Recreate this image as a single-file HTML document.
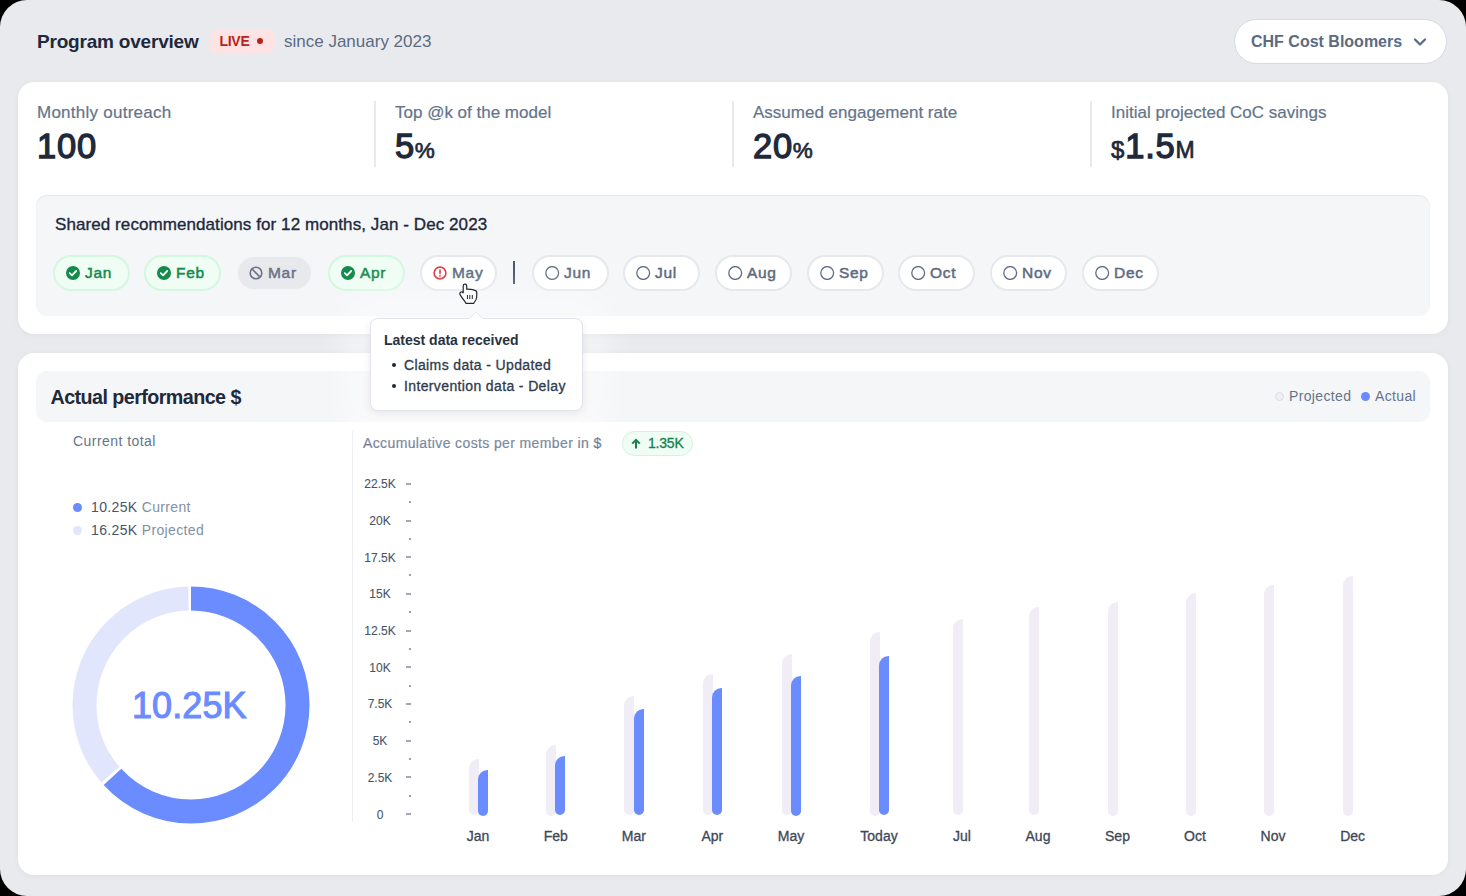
<!DOCTYPE html>
<html><head><meta charset="utf-8">
<style>
*{box-sizing:border-box;margin:0;padding:0}
html,body{width:1466px;height:896px;overflow:hidden;background:#000}
body{font-family:"Liberation Sans",sans-serif;position:relative}
.frame{position:absolute;left:0;top:0;width:1466px;height:896px;background:#e9eaee;border-radius:27px;overflow:hidden}
.t{position:absolute;line-height:1;white-space:nowrap}
.panel{position:absolute;left:18px;width:1430px;background:#fff;border-radius:16px;box-shadow:0 1px 6px rgba(15,23,42,0.045)}
.gbox{position:absolute;background:#f5f6f8;border-radius:11px}
.vdiv{position:absolute;width:2px;background:#e7e9ee}
.chip{position:absolute;top:255px;height:36px;width:77px;border-radius:18px;border:2px solid #e6e8ec;background:#fff}
.chip.g{background:#effdf4;border-color:#d3f8df}
.chip.x{background:#e8e9ed;border-color:#f4f5f7}
.chip svg{position:absolute;left:11px;top:9px}
.chip span{position:absolute;left:30px;top:7px;font-size:15.5px;line-height:18px;color:#5d6b82;-webkit-text-stroke-width:0.5px;letter-spacing:0.7px}
.chip.g span{color:#148a4b}
.chip.x span{color:#6b7385}
.ylab{position:absolute;font-size:12px;line-height:1;color:#475569;-webkit-text-stroke-width:0.1px;width:40px;text-align:center;left:360px}
.tick{position:absolute;left:406px;width:5px;height:1.5px;background:#a0a8b8}
.mtick{position:absolute;left:409px;width:2px;height:1.5px;background:#98a1b2}
.bar{position:absolute;width:10px;border-radius:9.5px 0 5px 5px}
.bg{background:#f0edf6}
.bb{background:#6b8cff}
.xl{position:absolute;top:829px;font-size:14px;line-height:1;color:#3e4859;-webkit-text-stroke-width:0.3px;width:60px;text-align:center}
</style></head><body>
<div class="frame">
  <!-- header -->
  <div class="t" style="left:37px;top:32px;font-size:19px;font-weight:bold;color:#1e293b;letter-spacing:-0.2px">Program overview</div>
  <div style="position:absolute;left:209px;top:29px;width:65.5px;height:24.5px;border-radius:10px;background:#fde3e3"></div>
  <div class="t" style="left:219.5px;top:34px;font-size:14px;font-weight:bold;color:#b8221c;letter-spacing:-0.3px">LIVE</div>
  <div style="position:absolute;left:257px;top:38px;width:6px;height:6px;border-radius:50%;background:#b8221c"></div>
  <div class="t" style="left:284px;top:33px;font-size:17px;color:#5b6b82">since January 2023</div>

  <div style="position:absolute;left:1234px;top:18.5px;width:213px;height:45px;border-radius:23px;background:#fff;border:1px solid #d6dae1"></div>
  <div class="t" style="left:1251px;top:34px;font-size:16px;font-weight:bold;color:#5b6b82">CHF Cost Bloomers</div>
  <svg style="position:absolute;left:1413.3px;top:36.5px" width="14" height="10" viewBox="0 0 14 10"><path d="M2 2.5 L7 7.5 L12 2.5" fill="none" stroke="#5b6b82" stroke-width="2.3" stroke-linecap="round" stroke-linejoin="round"/></svg>

  <!-- panel 1 -->
  <div class="panel" style="top:82px;height:252px"></div>
  <div class="t" style="left:37px;top:104px;font-size:17px;color:#64748b;-webkit-text-stroke-width:0.2px;letter-spacing:0.25px">Monthly outreach</div>
  <div class="t" style="left:37px;top:129px;font-size:34.5px;color:#1e293b;-webkit-text-stroke-width:1.3px;letter-spacing:0.8px">100</div>
  <div class="vdiv" style="left:374px;top:101px;height:66px"></div>
  <div class="t" style="left:395px;top:104px;font-size:17px;color:#64748b;-webkit-text-stroke-width:0.2px">Top @k of the model</div>
  <div class="t" style="left:395px;top:129px;font-size:34.5px;color:#1e293b;-webkit-text-stroke-width:1.3px;letter-spacing:0.8px">5<span style="font-size:22.5px;margin-left:-0.3px;letter-spacing:0;-webkit-text-stroke-width:0.7px">%</span></div>
  <div class="vdiv" style="left:732px;top:101px;height:66px"></div>
  <div class="t" style="left:753px;top:104px;font-size:17px;color:#64748b;-webkit-text-stroke-width:0.2px">Assumed engagement rate</div>
  <div class="t" style="left:753px;top:129px;font-size:34.5px;color:#1e293b;-webkit-text-stroke-width:1.3px;letter-spacing:0.8px">20<span style="font-size:22.5px;margin-left:-0.3px;letter-spacing:0;-webkit-text-stroke-width:0.7px">%</span></div>
  <div class="vdiv" style="left:1090px;top:101px;height:66px"></div>
  <div class="t" style="left:1111px;top:104px;font-size:17px;color:#64748b;-webkit-text-stroke-width:0.2px">Initial projected CoC savings</div>
  <div class="t" style="left:1111px;top:129px;font-size:34.5px;color:#1e293b;-webkit-text-stroke-width:1.3px;letter-spacing:0.8px"><span style="font-size:24px;-webkit-text-stroke-width:0.7px">$</span>1.5<span style="font-size:23px;letter-spacing:0;-webkit-text-stroke-width:0.7px">M</span></div>

  <div class="gbox" style="left:36px;top:195px;width:1394px;height:121px;box-shadow:inset 0 1px 1.5px rgba(16,24,40,0.07)"></div>
  <div class="t" style="left:55px;top:216px;font-size:17px;color:#1e293b;letter-spacing:0.08px;-webkit-text-stroke-width:0.35px">Shared recommendations for 12 months, Jan - Dec 2023</div>

  <div class="chip g" style="left:53px"><svg width="14" height="14" viewBox="0 0 14 14"><circle cx="7" cy="7" r="7" fill="#148a4b"/><path d="M3.8 7.2 L6 9.3 L10.2 5" fill="none" stroke="#fff" stroke-width="1.8" stroke-linecap="round" stroke-linejoin="round"/></svg><span>Jan</span></div>
  <div class="chip g" style="left:144px"><svg width="14" height="14" viewBox="0 0 14 14"><circle cx="7" cy="7" r="7" fill="#148a4b"/><path d="M3.8 7.2 L6 9.3 L10.2 5" fill="none" stroke="#fff" stroke-width="1.8" stroke-linecap="round" stroke-linejoin="round"/></svg><span>Feb</span></div>
  <div class="chip x" style="left:236px"><svg width="14" height="14" viewBox="0 0 14 14"><circle cx="7" cy="7" r="5.8" fill="none" stroke="#6b7385" stroke-width="1.6"/><path d="M3 3 L11 11" stroke="#6b7385" stroke-width="1.6"/></svg><span>Mar</span></div>
  <div class="chip g" style="left:328px"><svg width="14" height="14" viewBox="0 0 14 14"><circle cx="7" cy="7" r="7" fill="#148a4b"/><path d="M3.8 7.2 L6 9.3 L10.2 5" fill="none" stroke="#fff" stroke-width="1.8" stroke-linecap="round" stroke-linejoin="round"/></svg><span>Apr</span></div>
  <div class="chip" style="left:420px"><svg width="14" height="14" viewBox="0 0 14 14"><circle cx="7" cy="7" r="5.9" fill="none" stroke="#e0393e" stroke-width="1.6"/><path d="M7 4 L7 7.6" stroke="#e0393e" stroke-width="1.6" stroke-linecap="round"/><circle cx="7" cy="9.9" r="0.9" fill="#e0393e"/></svg><span>May</span></div>
  <div style="position:absolute;left:513px;top:261px;width:2px;height:23px;background:#4a5870"></div>
  <div class="chip" style="left:532px"><svg width="15" height="14" viewBox="0 0 15 14"><circle cx="7.2" cy="7" r="6.4" fill="none" stroke="#5d6b82" stroke-width="1.25"/></svg><span>Jun</span></div>
  <div class="chip" style="left:623px"><svg width="15" height="14" viewBox="0 0 15 14"><circle cx="7.2" cy="7" r="6.4" fill="none" stroke="#5d6b82" stroke-width="1.25"/></svg><span>Jul</span></div>
  <div class="chip" style="left:715px"><svg width="15" height="14" viewBox="0 0 15 14"><circle cx="7.2" cy="7" r="6.4" fill="none" stroke="#5d6b82" stroke-width="1.25"/></svg><span>Aug</span></div>
  <div class="chip" style="left:807px"><svg width="15" height="14" viewBox="0 0 15 14"><circle cx="7.2" cy="7" r="6.4" fill="none" stroke="#5d6b82" stroke-width="1.25"/></svg><span>Sep</span></div>
  <div class="chip" style="left:898px"><svg width="15" height="14" viewBox="0 0 15 14"><circle cx="7.2" cy="7" r="6.4" fill="none" stroke="#5d6b82" stroke-width="1.25"/></svg><span>Oct</span></div>
  <div class="chip" style="left:990px"><svg width="15" height="14" viewBox="0 0 15 14"><circle cx="7.2" cy="7" r="6.4" fill="none" stroke="#5d6b82" stroke-width="1.25"/></svg><span>Nov</span></div>
  <div class="chip" style="left:1082px"><svg width="15" height="14" viewBox="0 0 15 14"><circle cx="7.2" cy="7" r="6.4" fill="none" stroke="#5d6b82" stroke-width="1.25"/></svg><span>Dec</span></div>

  <!-- panel 2 -->
  <div class="panel" style="top:353px;height:522px"></div>
  <div class="gbox" style="left:36.3px;top:371.3px;width:1393.7px;height:50.5px"></div>
  <div class="t" style="left:50.5px;top:387.5px;font-size:19.7px;font-weight:bold;color:#1e293b;letter-spacing:-0.55px">Actual performance $</div>
  <div style="position:absolute;left:1275px;top:392px;width:9px;height:9px;border-radius:50%;border:1px solid #d9dde5;background:#f0eef5"></div>
  <div class="t" style="left:1289px;top:389px;font-size:14px;color:#64748b;letter-spacing:0.35px">Projected</div>
  <div style="position:absolute;left:1361px;top:392px;width:9px;height:9px;border-radius:50%;background:#6b8cff"></div>
  <div class="t" style="left:1375px;top:389px;font-size:14px;color:#64748b;letter-spacing:0.35px">Actual</div>

  <div class="t" style="left:73px;top:434px;font-size:14px;color:#64748b;letter-spacing:0.45px">Current total</div>
  <div style="position:absolute;left:73px;top:503px;width:9px;height:9px;border-radius:50%;background:#6b8cff"></div>
  <div class="t" style="left:91px;top:500px;font-size:14px;color:#475569;letter-spacing:0.35px">10.25K <span style="color:#8390a3">Current</span></div>
  <div style="position:absolute;left:73px;top:526px;width:9px;height:9px;border-radius:50%;background:#e1e6fd"></div>
  <div class="t" style="left:91px;top:523px;font-size:14px;color:#475569;letter-spacing:0.35px">16.25K <span style="color:#8390a3">Projected</span></div>

  <svg style="position:absolute;left:72px;top:586px" width="238" height="238" viewBox="0 0 238 238">
    <g transform="rotate(-90 119 119)"><circle cx="119" cy="119" r="106.5" fill="none" stroke="#e1e6fd" stroke-width="24" stroke-dasharray="240.5 1000" stroke-dashoffset="-425.4"/>
    <circle cx="119" cy="119" r="106.5" fill="none" stroke="#6a8cff" stroke-width="24" stroke-dasharray="422.4 1000" stroke-dashoffset="0"/></g>
  </svg>
  <div class="t" style="left:132px;top:688px;font-size:36px;color:#6b8cff;-webkit-text-stroke-width:1.1px;letter-spacing:0.1px">10.25K</div>

  <div class="vdiv" style="left:352px;top:431px;height:391px;width:1px;background:#eceef2"></div>
  <div class="t" style="left:363px;top:436px;font-size:14px;color:#64748b;letter-spacing:0.38px;-webkit-text-stroke-width:0.2px">Accumulative costs per member in $</div>
  <div style="position:absolute;left:622px;top:431px;width:71px;height:25px;border-radius:13px;background:#effdf5;border:1px solid #d0f5dc"></div>
  <div class="t" style="left:648px;top:436px;font-size:14px;color:#128248;letter-spacing:-0.2px;-webkit-text-stroke-width:0.3px">1.35K</div>
  <svg style="position:absolute;left:629.6px;top:437.5px" width="12" height="12" viewBox="0 0 12 12"><path d="M6 10.5 L6 2.2 M2.2 5.6 L6 1.8 L9.8 5.6" fill="none" stroke="#15824a" stroke-width="2" stroke-linecap="butt" stroke-linejoin="miter"/></svg>
  <div class="ylab" style="top:808.5px">0</div>
<div class="tick" style="top:813px"></div>
<div class="ylab" style="top:771.8px">2.5K</div>
<div class="tick" style="top:776px"></div>
<div class="ylab" style="top:735.1px">5K</div>
<div class="tick" style="top:740px"></div>
<div class="ylab" style="top:698.4px">7.5K</div>
<div class="tick" style="top:703px"></div>
<div class="ylab" style="top:661.7px">10K</div>
<div class="tick" style="top:666px"></div>
<div class="ylab" style="top:625.0px">12.5K</div>
<div class="tick" style="top:630px"></div>
<div class="ylab" style="top:588.3px">15K</div>
<div class="tick" style="top:593px"></div>
<div class="ylab" style="top:551.6px">17.5K</div>
<div class="tick" style="top:556px"></div>
<div class="ylab" style="top:514.9px">20K</div>
<div class="tick" style="top:520px"></div>
<div class="ylab" style="top:478.2px">22.5K</div>
<div class="tick" style="top:483px"></div>
<div class="mtick" style="top:795px"></div>
<div class="mtick" style="top:758px"></div>
<div class="mtick" style="top:721px"></div>
<div class="mtick" style="top:685px"></div>
<div class="mtick" style="top:648px"></div>
<div class="mtick" style="top:611px"></div>
<div class="mtick" style="top:574px"></div>
<div class="mtick" style="top:538px"></div>
<div class="mtick" style="top:501px"></div>
<div class="bar bg" style="left:468.5px;top:759.3px;height:56.2px"></div>
<div class="bar bb" style="left:477.7px;top:770.0px;height:45.5px"></div>
<div class="xl" style="left:448.0px">Jan</div>
<div class="bar bg" style="left:546.2px;top:744.5px;height:71.0px"></div>
<div class="bar bb" style="left:555.4px;top:755.8px;height:59.7px"></div>
<div class="xl" style="left:525.7px">Feb</div>
<div class="bar bg" style="left:624.4px;top:696.3px;height:119.2px"></div>
<div class="bar bb" style="left:633.6px;top:708.9px;height:106.6px"></div>
<div class="xl" style="left:603.9px">Mar</div>
<div class="bar bg" style="left:702.9px;top:673.8px;height:141.7px"></div>
<div class="bar bb" style="left:712.1px;top:688.2px;height:127.3px"></div>
<div class="xl" style="left:682.4px">Apr</div>
<div class="bar bg" style="left:781.5px;top:654.4px;height:161.1px"></div>
<div class="bar bb" style="left:790.7px;top:675.5px;height:140.0px"></div>
<div class="xl" style="left:761.0px">May</div>
<div class="bar bg" style="left:869.5px;top:632.0px;height:183.5px"></div>
<div class="bar bb" style="left:878.7px;top:656.4px;height:159.1px"></div>
<div class="xl" style="left:849.0px">Today</div>
<div class="bar bg" style="left:952.5px;top:618.6px;height:196.9px"></div>
<div class="xl" style="left:932.0px">Jul</div>
<div class="bar bg" style="left:1028.5px;top:606.9px;height:208.6px"></div>
<div class="xl" style="left:1008.0px">Aug</div>
<div class="bar bg" style="left:1108.0px;top:602.0px;height:213.5px"></div>
<div class="xl" style="left:1087.5px">Sep</div>
<div class="bar bg" style="left:1185.5px;top:593.0px;height:222.5px"></div>
<div class="xl" style="left:1165.0px">Oct</div>
<div class="bar bg" style="left:1263.5px;top:585.0px;height:230.5px"></div>
<div class="xl" style="left:1243.0px">Nov</div>
<div class="bar bg" style="left:1343.1px;top:576.0px;height:239.5px"></div>
<div class="xl" style="left:1322.6px">Dec</div>
  <!-- tooltip -->
  <div style="position:absolute;left:340px;top:290px;width:272px;height:150px;border-radius:40px;background:rgba(255,255,255,0.4);filter:blur(14px)"></div>
  <div style="position:absolute;left:370px;top:317.8px;width:213px;height:93.5px;border-radius:8px;background:#fff;border:1px solid #e1e4ea;box-shadow:0 2px 8px rgba(16,24,40,0.08)"></div>
  <svg style="position:absolute;left:469px;top:311px" width="14" height="9" viewBox="0 0 14 9"><path d="M0 8 L7 0.8 L14 8" fill="#fff" stroke="#e3e6eb" stroke-width="1"/><rect x="0" y="7.6" width="14" height="2" fill="#fff"/></svg>
  <div class="t" style="left:384px;top:333px;font-size:14px;font-weight:bold;color:#283241">Latest data received</div>
  <div style="position:absolute;left:392px;top:363px;width:4px;height:4px;border-radius:50%;background:#1e293b"></div>
  <div class="t" style="left:404px;top:358px;font-size:14px;color:#2f3a4b;letter-spacing:0.37px;-webkit-text-stroke-width:0.3px">Claims data - Updated</div>
  <div style="position:absolute;left:392px;top:384px;width:4px;height:4px;border-radius:50%;background:#1e293b"></div>
  <div class="t" style="left:404px;top:379px;font-size:14px;color:#2f3a4b;letter-spacing:0.37px;-webkit-text-stroke-width:0.3px">Intervention data - Delay</div>
  <!-- cursor -->
  <svg style="position:absolute;left:455px;top:278px" width="30" height="30" viewBox="0 0 30 30"><path d="M8.2 14.8 L8.2 7.8 Q8.2 6.1 9.95 6.1 Q11.7 6.1 11.7 7.8 L11.7 11.2 Q13.5 10.9 15 11.4 Q17 11.2 18.5 11.9 Q21.8 12.4 21.8 15 L21.6 19.5 Q21.2 22.5 19.2 24.4 L18.8 25.4 L11 25.4 L10.4 24.2 Q7 19.8 5 16.6 Q4.4 14.6 6 14 Q7.4 13.6 8.2 14.8 Z" fill="#fff" stroke="#23272f" stroke-width="1.2" stroke-linejoin="round"/><path d="M12.4 17 V21 M14.8 17 V21 M17.3 17 V21" stroke="#23272f" stroke-width="1"/></svg>
</div>
</body></html>
